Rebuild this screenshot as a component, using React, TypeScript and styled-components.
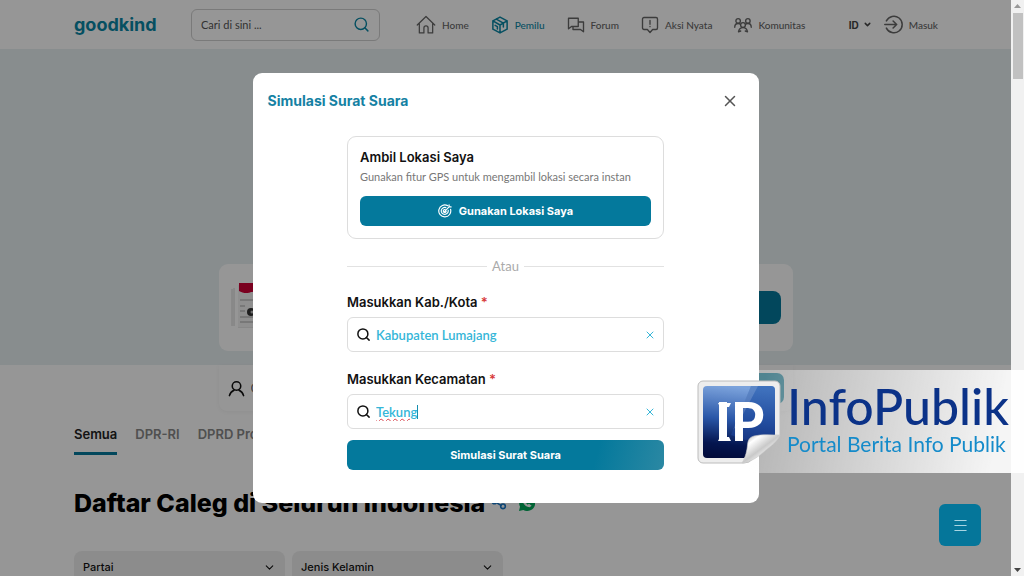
import React from "react";
import styled, { createGlobalStyle, css } from "styled-components";
import { ChevronDown, Menu, Search, X } from "lucide-react";

const display = `Inter, "Open Sans", sans-serif`;
const body = `Lato, "Open Sans", sans-serif`;
const teal = "#04799c";

const GlobalStyle = createGlobalStyle`
  *, *::before, *::after { box-sizing: border-box; }
  body { margin: 0; background: #fff; font-family: ${body}; color: #111; }
  button, input, select { font: inherit; color: inherit; border: 0; background: none; padding: 0; margin: 0; }
  input, select { outline: 0; min-width: 0; }
  h1, h2, h3, p { margin: 0; }
  a { color: inherit; text-decoration: none; }
  svg { display: block; flex: none; }
`;

const Frame = styled.div`
  display: grid;
  grid-template-columns: minmax(0, 1fr) 13px;
  height: 100vh;
  overflow: hidden;
`;

const Viewport = styled.div`
  position: relative;
  overflow: hidden;
`;

const Header = styled.header`
  display: flex;
  align-items: center;
  height: 49px;
  padding: 0 73px 0 74px;
`;

const Logo = styled.a`
  width: 117px;
  font: 700 18px/24px ${display};
  color: #0a87a5;
`;

const HeaderSearch = styled.form`
  display: flex;
  align-items: center;
  width: 189px;
  height: 32px;
  padding: 0 9px;
  border: 1px solid #cfcfcf;
  border-radius: 6px;
  color: #555;

  input { flex: 1; font-size: 11px; }
  input::placeholder { color: #555; opacity: 1; }
  button { color: #0a87a5; }
`;

const Nav = styled.nav`
  display: flex;
  gap: 22px;
  margin-left: 36px;
`;

const NavLink = styled.a<{ $active?: boolean }>`
  display: flex;
  align-items: center;
  gap: 6px;
  font: 500 10px/16px ${body};
  white-space: nowrap;
  color: ${(p) => (p.$active ? "#0a87a5" : "#666")};
`;

const Account = styled.div`
  display: flex;
  align-items: center;
  gap: 12px;
  margin-left: auto;
`;

const Language = styled.button`
  display: flex;
  align-items: center;
  gap: 4px;
  font: 700 10px/16px ${display};
  color: #444;
`;

const Hero = styled.section`
  display: flex;
  flex-direction: column;
  justify-content: flex-end;
  align-items: center;
  height: 316px;
  padding-bottom: 14px;
  background: #e8f0f2;
`;

const Panel = styled.div`
  display: flex;
  align-items: center;
  justify-content: space-between;
  width: 574px;
  max-width: 100%;
  background: #fff;
`;

const BallotPanel = styled(Panel)`
  height: 87px;
  padding: 0 12px;
  border-radius: 9px;
`;

const PanelButton = styled.button`
  width: 120px;
  height: 33px;
  border-radius: 8px;
  background: ${teal};
`;

const FinderPanel = styled(Panel)`
  gap: 6px;
  height: 46px;
  margin: 0 auto;
  padding: 0 9px;
  border-radius: 0 0 8px 8px;
  box-shadow: 0 1px 4px rgba(0, 0, 0, 0.05);

  input { flex: 1; font-size: 13px; }
  button {
    display: grid;
    place-items: center;
    width: 32px;
    height: 31px;
    border-radius: 7px;
    background: #0a87a5;
    color: #fff;
  }
`;

const Content = styled.main`
  padding: 13px 74px 0;
`;

const Tabs = styled.div`
  display: flex;
  gap: 18px;
`;

const Tab = styled.button<{ $active?: boolean }>`
  padding-bottom: 8px;
  border-bottom: 3px solid ${(p) => (p.$active ? teal : "transparent")};
  font: 600 13px/20px ${display};
  white-space: nowrap;
  color: ${(p) => (p.$active ? "#222" : "#888")};
`;

const TitleRow = styled.div`
  display: flex;
  align-items: center;
  gap: 6px;
  margin: 32px 0;

  h1 { font: 800 25px/32px ${display}; white-space: nowrap; color: #000; }
`;

const ShareLink = styled.a`
  margin-right: 6px;
  color: #1878c8;
`;

const Filters = styled.div`
  display: flex;
  gap: 7px;
`;

const Filter = styled.label`
  display: grid;
  align-items: center;
  width: 211px;
  height: 32px;
  border-radius: 8px;
  background: #efefef;

  select, svg { grid-area: 1 / 1; }
  select { appearance: none; height: 32px; padding: 0 9px; font: 500 11px/16px ${display}; }
  svg { justify-self: end; margin-right: 9px; pointer-events: none; }
`;

const Overlay = styled.div`
  position: absolute;
  inset: 0;
  display: grid;
  place-items: center;
  background: rgba(0, 0, 0, 0.41);
`;

const Dialog = styled.section`
  width: 506px;
  max-width: 100%;
  padding: 0 15px 33px;
  border-radius: 9px;
  background: #fff;
`;

const DialogHeader = styled.header`
  display: flex;
  align-items: center;
  justify-content: space-between;
  height: 63px;
  padding: 0 5px 7px 0;

  h2 { font: 700 14px/20px ${display}; color: #1481a3; }
  button { color: #555; }
`;

const DialogBody = styled.form`
  display: flex;
  flex-direction: column;
  width: 317px;
  max-width: 100%;
  margin: 0 auto;
`;

const LocationCard = styled.div`
  display: flex;
  flex-direction: column;
  padding: 12px;
  border: 1px solid #ddd;
  border-radius: 9px;

  h3 { font: 600 13px/16px ${display}; }
  p { margin: 4px 0 11px; font: 400 11px/16px ${body}; color: #777; white-space: nowrap; }
`;

const PrimaryButton = styled.button<{ $shaded?: boolean }>`
  display: flex;
  align-items: center;
  justify-content: center;
  gap: 7px;
  width: 100%;
  height: 30px;
  border-radius: 6px;
  background: ${(p) => (p.$shaded ? `linear-gradient(105deg, ${teal} 78%, #2b88a3)` : teal)};
  font: 700 11px/16px ${display};
  color: #fff;
`;

const Divider = styled.div`
  display: flex;
  align-items: center;
  gap: 5px;
  margin: 19px 0 20px;
  font: 400 13px/16px ${body};
  color: #aaa;

  &::before, &::after { content: ""; flex: 1; height: 1px; background: #e2e2e2; }
`;

const FieldLabel = styled.label`
  margin-bottom: 7px;
  font: 600 13px/16px ${display};

  span { color: #d83a3a; }
`;

const Field = styled.div`
  display: flex;
  align-items: center;
  height: 35px;
  margin-bottom: 19px;
  padding: 0 7px 0 8px;
  border: 1px solid #ddd;
  border-radius: 6px;

  &:last-of-type { margin-bottom: 11px; }
  button { margin-left: auto; color: #35b6d8; }
`;

const FieldInput = styled.input<{ $misspelt?: boolean }>`
  field-sizing: content;
  margin-left: 5px;
  font: 600 13px/18px ${body};
  color: #35b6d8;
  ${(p) => p.$misspelt && css`text-decoration: underline wavy #d8434e 1px; text-underline-offset: 1px;`}
`;

const Caret = styled.span`
  width: 1px;
  height: 14px;
  background: #168eaf;
`;

const MenuButton = styled.button`
  position: absolute;
  right: 30px;
  bottom: 30px;
  display: grid;
  place-items: center;
  width: 42px;
  height: 42px;
  border-radius: 6px;
  background: #05769a;
  color: #a9d5e2;
`;

const Scrollbar = styled.div`
  display: flex;
  flex-direction: column;
  align-items: center;
  justify-content: space-between;
  padding: 4px 0;
  background: #f1f1f1;
`;

const Thumb = styled.div`
  width: 10px;
  height: 66px;
  margin: 5px 0 auto;
  background: #c1c1c1;
`;

const Watermark = styled.aside`
  position: fixed;
  right: 0;
  bottom: 103px;
  display: flex;
  align-items: center;
  gap: 6px;
  height: 103px;
  padding-right: 16px;
  background: linear-gradient(100deg, rgba(255, 255, 255, 0.3) 20%, rgba(255, 255, 255, 0.9) 90%);
`;

const Brand = styled.div`
  width: 221px;
  padding-bottom: 8px;
  white-space: nowrap;

  strong { display: block; font: 500 50px/52px ${body}; color: #0b3288; }
  span { display: block; font: 400 21px/24px ${body}; color: #158bca; }
`;

type IconProps = { size?: number; children: React.ReactNode; width?: number };
const Icon = ({ size = 18, width = 1.5, children }: IconProps) => (
  <svg width={size} height={size} viewBox="0 0 24 24" fill="none" stroke="currentColor" strokeWidth={width} strokeLinecap="round" strokeLinejoin="round" aria-hidden="true">
    {children}
  </svg>
);

const HomeIcon = () => (
  <Icon size={20}><path d="M1.5 12 12 1.8 22.5 12M4 10v11.5h5.5v-6a2.5 2.5 0 0 1 5 0v6H20V10" /></Icon>
);
const BoxIcon = () => (
  <Icon width={2}><path d="M12 1.5 21.5 6.5v11L12 22.500l-9.500-5v-11zM2.500 6.500 12 12l9.500-5.500M12 12v10.500M7 4.200l9.500 5.300v5M5.500 12.500l3 1.700v3" /></Icon>
);
const ForumIcon = () => (
  <Icon width={1.8}><path d="M2 3h13v11H6l-4 3zM15 8h7v13l-4-3H8v-4M6 14h9V8" /></Icon>
);
const ActionIcon = () => (
  <Icon width={1.8}><path d="M4 2h16a2 2 0 0 1 2 2v12a2 2 0 0 1-2 2h-4.500L12 22l-3.500-4H4a2 2 0 0 1-2-2V4a2 2 0 0 1 2-2zM12 6v5M12 14v.2" /></Icon>
);
const PeopleIcon = () => (
  <Icon width={1.8}>
    <circle cx="5.500" cy="6.500" r="3" /><circle cx="18.500" cy="6.500" r="3" /><circle cx="12" cy="12" r="3.200" />
    <path d="M1 15c0-3 1.500-5 4.500-5 1.200 0 2.200.4 3 1M23 15c0-3-1.500-5-4.500-5-1.200 0-2.200.4-3 1M6 21c.5-3.500 2.500-5.500 6-5.500s5.500 2 6 5.500M6 21l3-1M18 21l-3-1" />
  </Icon>
);
const LoginIcon = () => (
  <Icon size={19} width={1.9}><path d="M3 7.500a10.500 10.500 0 1 1 0 9M1 12h15M11.500 7.500 16 12l-4.500 4.500" /></Icon>
);
const UserIcon = () => (
  <Icon size={17} width={2.2}><circle cx="12" cy="8.500" r="6" /><path d="M2 22c1-4 3-6 6.500-7.500M22 22c-1-4-3-6-6.500-7.500" /></Icon>
);
const TargetIcon = () => (
  <Icon size={14} width={2}>
    <path d="M21.500 9a10.300 10.300 0 1 1-5-6.200M17.500 11a6 6 0 1 1-4-4.800M14 12.500a2.500 2.500 0 1 1-2-3M11.500 12.500 19 5M19 5V1.500M19 5h3.500" />
  </Icon>
);
const ShareIcon = () => (
  <Icon size={16} width={2.4}><circle cx="5" cy="10" r="3" /><circle cx="18" cy="17" r="3.500" /><circle cx="18" cy="4" r="3" /><path d="m8 11.500 7 4M8 8.500l7-3.500" /></Icon>
);
const WhatsAppIcon = () => (
  <svg width="16" height="16" viewBox="0 0 24 24" aria-hidden="true">
    <path fill="#00a859" d="M12 0a12 12 0 1 1-5.500 22.500L0 24l1.500-6.500A12 12 0 0 1 12 0z" />
    <path fill="#fff" d="M8 5 5.500 8c0 5 5 10.500 10.500 10.500l3-2.500-4-3-2 1.500-4-4L10.500 8z" />
  </svg>
);

const BallotArt = () => (
  <svg width="58" height="50" viewBox="0 0 58 50" aria-hidden="true">
    <path d="M3 5v38M1 6v37M7 44h48" stroke="#d2d2d2" fill="none" />
    <path d="M7 2h48v42H7z" fill="#f4f4f4" />
    <path d="M8 0h46v8l-34 1c-3 2-9 1-12-1z" fill="#d00036" />
    <path d="M9 17h44M9 23h5M9 28h5M9 34h44M9 39h44" stroke="#ccc" strokeWidth="2" />
    <circle cx="20" cy="29" r="4" fill="#333" />
    <circle cx="21" cy="29" r="1.500" fill="#bbb" />
  </svg>
);

const BrandMark = () => (
  <svg width="84" height="84" viewBox="0 0 84 84" aria-hidden="true">
    <defs>
      <linearGradient id="blue" x1="0.3" y1="0" x2="0.2" y2="1">
        <stop offset="0" stopColor="#7ca3dc" /><stop offset="0.45" stopColor="#2a57a8" />
        <stop offset="0.8" stopColor="#04154f" /><stop offset="1" stopColor="#020b3a" />
      </linearGradient>
      <linearGradient id="shine" x1="0" y1="0" x2="0" y2="1">
        <stop offset="0" stopColor="#2b62b4" /><stop offset="1" stopColor="#1a3d8f" />
      </linearGradient>
      <linearGradient id="curl" x1="0" y1="0" x2="1" y2="1">
        <stop offset="0" stopColor="#8c8c8c" /><stop offset="0.25" stopColor="#fff" />
        <stop offset="0.5" stopColor="#c9c9c9" /><stop offset="0.7" stopColor="#fafafa" />
      </linearGradient>
    </defs>
    <path d="M6 1h72a5 5 0 0 1 5 5v50L52 82l-5 1H6a5 5 0 0 1-5-5V6a5 5 0 0 1 5-5z" fill="#ededed" stroke="#bcbcbc" />
    <path d="M10 6h64a4 4 0 0 1 4 4v45L47 78H10a4 4 0 0 1-4-4V10a4 4 0 0 1 4-4z" fill="url(#blue)" />
    <path d="M54 6h20a4 4 0 0 1 4 4v45l-30 5-14-5z" fill="url(#shine)" opacity="0.75" />
    <path d="M54 6h7L41 44l-5 6z" fill="#fff" opacity="0.16" />
    <text x="18" y="61" fill="#fff" fontFamily="Lato, sans-serif" fontWeight="900" fontSize="53">IP</text>
    <path d="M21 23h13l-2 4h-9zM21 61h13l-2-4h-9z" fill="#fff" />
    <path d="M83 55c-9 0-18-1-26 1-7 2-6 7-7 13-1 6-3 11-5 14 10-1 17-7 24-13 6-5 11-8 14-15z" fill="url(#curl)" stroke="#c7c7c7" strokeWidth="0.600" />
  </svg>
);

const navItems = [
  { label: "Home", icon: <HomeIcon /> },
  { label: "Pemilu", icon: <BoxIcon />, active: true },
  { label: "Forum", icon: <ForumIcon /> },
  { label: "Aksi Nyata", icon: <ActionIcon /> },
  { label: "Komunitas", icon: <PeopleIcon /> },
];

function LocationField({ id, label, value, editing }: { id: string; label: string; value: string; editing?: boolean }) {
  return (
    <>
      <FieldLabel htmlFor={id}>{label} <span>*</span></FieldLabel>
      <Field>
        <Search size={15} strokeWidth={2.4} color="#111" />
        <FieldInput id={id} defaultValue={value} $misspelt={editing} spellCheck={false} />
        {editing && <Caret />}
        <button type="button" aria-label={`Hapus ${value}`}><X size={12} strokeWidth={2} /></button>
      </Field>
    </>
  );
}

export default function App() {
  return (
    <>
      <GlobalStyle />
      <Frame>
        <Viewport>
          <Header>
            <Logo href="#">goodkind</Logo>
            <HeaderSearch>
              <input type="search" aria-label="Cari" placeholder="Cari di sini ..." />
              <button type="button" aria-label="Cari"><Search size={17} /></button>
            </HeaderSearch>
            <Nav>
              {navItems.map((item) => (
                <NavLink key={item.label} href="#" $active={item.active}>{item.icon}{item.label}</NavLink>
              ))}
            </Nav>
            <Account>
              <Language type="button">ID <ChevronDown size={9} strokeWidth={4} /></Language>
              <NavLink href="#"><LoginIcon />Masuk</NavLink>
            </Account>
          </Header>
          <Hero>
            <BallotPanel>
              <BallotArt />
              <PanelButton type="button" aria-label="Mulai simulasi" />
            </BallotPanel>
          </Hero>
          <FinderPanel>
            <UserIcon />
            <input type="search" aria-label="Cari caleg" placeholder="Cari nama caleg" />
            <button type="button" aria-label="Cari caleg"><Search size={14} /></button>
          </FinderPanel>
          <Content>
            <Tabs>
              <Tab type="button" $active>Semua</Tab>
              <Tab type="button">DPR-RI</Tab>
              <Tab type="button">DPRD Provinsi</Tab>
            </Tabs>
            <TitleRow>
              <h1>Daftar Caleg di Seluruh Indonesia</h1>
              <ShareLink href="#" aria-label="Bagikan"><ShareIcon /></ShareLink>
              <a href="#" aria-label="WhatsApp"><WhatsAppIcon /></a>
            </TitleRow>
            <Filters>
              <Filter><select aria-label="Partai"><option>Partai</option></select><ChevronDown size={13} /></Filter>
              <Filter><select aria-label="Jenis Kelamin"><option>Jenis Kelamin</option></select><ChevronDown size={13} /></Filter>
            </Filters>
          </Content>
          <Overlay>
            <Dialog role="dialog" aria-labelledby="dialog-title">
              <DialogHeader>
                <h2 id="dialog-title">Simulasi Surat Suara</h2>
                <button type="button" aria-label="Tutup"><X size={18} strokeWidth={2} /></button>
              </DialogHeader>
              <DialogBody>
                <LocationCard>
                  <h3>Ambil Lokasi Saya</h3>
                  <p>Gunakan fitur GPS untuk mengambil lokasi secara instan</p>
                  <PrimaryButton type="button"><TargetIcon />Gunakan Lokasi Saya</PrimaryButton>
                </LocationCard>
                <Divider>Atau</Divider>
                <LocationField id="kota" label="Masukkan Kab./Kota" value="Kabupaten Lumajang" />
                <LocationField id="kecamatan" label="Masukkan Kecamatan" value="Tekung" editing />
                <PrimaryButton type="button" $shaded>Simulasi Surat Suara</PrimaryButton>
              </DialogBody>
            </Dialog>
          </Overlay>
          <MenuButton type="button" aria-label="Menu"><Menu size={17} strokeWidth={1.5} /></MenuButton>
        </Viewport>
        <Scrollbar>
          <svg width="7" height="4" viewBox="0 0 7 4"><path d="M0 4 3.500 0 7 4z" fill="#999" /></svg>
          <Thumb />
          <svg width="7" height="4" viewBox="0 0 7 4"><path d="M0 0h7L3.500 4z" fill="#444" /></svg>
        </Scrollbar>
      </Frame>
      <Watermark>
        <BrandMark />
        <Brand>
          <strong>InfoPublik</strong>
          <span>Portal Berita Info Publik</span>
        </Brand>
      </Watermark>
    </>
  );
}
